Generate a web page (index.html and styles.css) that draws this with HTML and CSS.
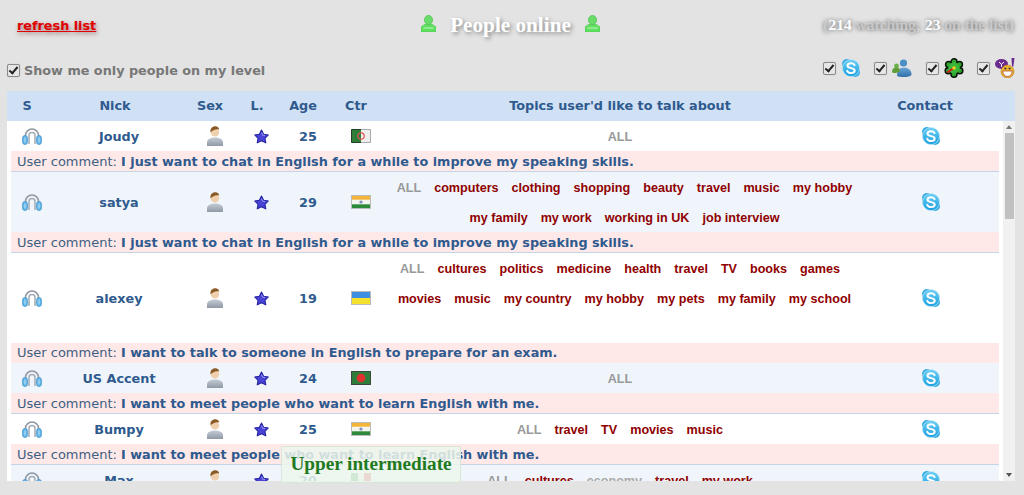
FILE: index.html
```html
<!DOCTYPE html>
<html lang="en">
<head>
<meta charset="utf-8">
<title>People online</title>
<link rel="stylesheet" href="styles.css">
</head>
<body>
<svg class="defs" width="0" height="0" aria-hidden="true">
  <defs>
    <linearGradient id="skypeFill" x1="0" y1="0" x2="0" y2="1"><stop offset="0" stop-color="#6fd0f5"/><stop offset="1" stop-color="#169fe0"/></linearGradient>
    <linearGradient id="bodyFill" x1="0" y1="0" x2="0" y2="1"><stop offset="0" stop-color="#c3cbd6"/><stop offset="1" stop-color="#8f98a5"/></linearGradient>
    <linearGradient id="msgFill" x1="0" y1="0" x2="0" y2="1"><stop offset="0" stop-color="#6aa6d8"/><stop offset="1" stop-color="#2f6ea8"/></linearGradient>
    <symbol id="skype" viewBox="0 0 20 20">
      <circle cx="6" cy="6" r="5" fill="#2fa9e6"/><circle cx="14" cy="14" r="5" fill="#2fa9e6"/>
      <circle cx="10" cy="10" r="8.6" fill="url(#skypeFill)" stroke="#c4e6f5" stroke-width=".7"/>
      <path d="M13.6 7.2C13 5.8 11.6 5.2 10 5.2c-2 0-3.5 1-3.500 2.500 0 3.300 7.200 1.600 7.200 4.800 0 1.600-1.700 2.500-3.700 2.500-1.800 0-3.200-.8-3.800-2.200" fill="none" stroke="#fff" stroke-width="2" stroke-linecap="round"/>
    </symbol>
    <symbol id="phones" viewBox="0 0 20 17">
      <path d="M3.500 10V7.500a6.500 6.500 0 0 1 13 0V10" fill="none" stroke="#8f98a3" stroke-width="1.500"/>
      <path d="M7 16V7.500a3 3 0 0 1 6 0V16" fill="none" stroke="#a3abb5" stroke-width="1.500"/>
      <rect x=".6" y="7.500" width="4.800" height="9" rx="2.300" fill="#62b6ea" stroke="#3b8ec8" stroke-width=".7"/>
      <rect x="14.600" y="7.500" width="4.800" height="9" rx="2.300" fill="#62b6ea" stroke="#3b8ec8" stroke-width=".7"/>
      <path d="M3 9.500v5M17 9.500v5" stroke="#bfe3f7" stroke-width="1"/>
    </symbol>
    <symbol id="person" viewBox="0 0 18 20">
      <path d="M1 20v-3.500C1 13 5 11.600 9 11.600s8 1.400 8 4.900V20z" fill="url(#bodyFill)"/>
      <circle cx="9" cy="6.400" r="4.200" fill="#f0cfae"/>
      <path d="M4.600 6.500C3.800 2.500 6.500 .3 9.200 .3c2.400 0 4 1.500 4 3.200-1.800-.3-3.700-.2-5.200.5-1 .5-2.400 1-3.400 2.500z" fill="#8a5a26"/>
    </symbol>
    <symbol id="star" viewBox="0 0 16 16">
      <path d="M8 1l2.300 4.600 5 .8-3.600 3.500.9 4.900L8 12.500l-4.600 2.300.9-4.900L.7 6.400l5-.8z" fill="#4a44d6" stroke="#2222a0" stroke-width="1.100" stroke-linejoin="round"/>
      <path d="M8 3.800l1.200 2.700 2.600.4" fill="none" stroke="#9a96f4" stroke-width="1.100"/>
    </symbol>
    <symbol id="user-green" viewBox="0 0 15 17">
      <path d="M0 17v-5l3.500-2.500h8L15 12v5z" fill="#5fe05f" stroke="#4cc24c" stroke-width=".6"/>
      <path d="M3.500 5a4 4.500 0 0 1 8 0c0 2.400-1.500 4.500-4 4.500S3.500 7.400 3.500 5z" fill="#69dc69" stroke="#4cc24c" stroke-width=".8"/>
      <path d="M2.500 13h10" stroke="#a6eea6" stroke-width="1.400"/>
    </symbol>
    <symbol id="messenger" viewBox="0 0 20 18">
      <circle cx="11.500" cy="4" r="3.600" fill="#4a8fc4"/>
      <path d="M5 16.500c0-5 2.500-8 7-8s7.500 3 7.500 7c0 1.500-3 2.500-7 2.500s-7.500-.5-7.500-1.500z" fill="url(#msgFill)"/>
      <circle cx="4.500" cy="7" r="2.400" fill="#6ab04c"/>
      <path d="M0 12.500c0-2.500 2-4 4.500-4S8 10 8 11.500 5 14 3 14s-3-.2-3-1.500z" fill="#5f9e3c"/>
    </symbol>
    <symbol id="icq" viewBox="0 0 20 20">
      <g fill="#2fa32f" stroke="#071207" stroke-width="1.500">
        <circle cx="10" cy="3.800" r="3"/><circle cx="15.400" cy="6.500" r="3"/><circle cx="15.800" cy="12.700" r="3"/>
        <circle cx="10" cy="16.200" r="3"/><circle cx="4.200" cy="12.700" r="3"/><circle cx="4.600" cy="6.500" r="3"/>
      </g>
      <circle cx="10" cy="10" r="5.800" fill="#39b539"/>
      <path d="M3 14.500L10 10" stroke="#d81818" stroke-width="1.800"/>
      <circle cx="10" cy="10" r="1.800" fill="#f0d020"/>
    </symbol>
    <symbol id="yahoo" viewBox="0 0 20 20">
      <ellipse cx="6.500" cy="6" rx="6.500" ry="5" fill="#6a2a8e"/>
      <path d="M4 4l2.500 2.300L9 4M6.500 6.300v2.500" fill="none" stroke="#fff" stroke-width="1"/>
      <path d="M16.500 0h3l-1.200 8.500h-1.300z" fill="#6a2a8e"/>
      <circle cx="12.500" cy="13.500" r="6.500" fill="#f2b632" stroke="#b07a1a" stroke-width=".6"/>
      <path d="M7.800 13h9.400c0 3.500-2.400 5.500-4.700 5.500S7.800 16.500 7.800 13z" fill="#fff" stroke="#a03a1a" stroke-width=".7"/>
      <circle cx="10.400" cy="10.500" r="1.100" fill="#333"/><circle cx="14.600" cy="10.500" r="1.100" fill="#333"/>
    </symbol>
    <symbol id="f-dz" viewBox="0 0 20 14">
      <rect width="20" height="14" fill="#ededed"/><rect width="10" height="14" fill="#2f7d3a"/>
      <circle cx="10" cy="7" r="3.200" fill="none" stroke="#e0524f" stroke-width="1.200"/>
      <rect x=".5" y=".5" width="19" height="13" fill="none" stroke="#aaa"/>
      <path d="M.5 .5v13h9.500M.5 .5h9.500" fill="none" stroke="#26402a"/>
    </symbol>
    <symbol id="f-in" viewBox="0 0 20 14">
      <rect width="20" height="14" fill="#f5f5f0"/><rect width="20" height="4.700" fill="#f2b53a"/><rect y="9.300" width="20" height="4.700" fill="#2d8a3a"/>
      <circle cx="10" cy="7" r="1.600" fill="#7a8fc0"/>
      <rect x=".5" y=".5" width="19" height="13" fill="none" stroke="#bbb"/>
    </symbol>
    <symbol id="f-ua" viewBox="0 0 20 14">
      <rect width="20" height="7" fill="#3f8fe0"/><rect y="7" width="20" height="7" fill="#f5e22e"/>
      <rect x=".5" y=".5" width="19" height="13" fill="none" stroke="#bbb"/>
    </symbol>
    <symbol id="f-bd" viewBox="0 0 20 14">
      <rect width="20" height="14" fill="#2f7d3a"/><circle cx="10" cy="7" r="4.300" fill="#e03030"/>
      <rect x=".5" y=".5" width="19" height="13" fill="none" stroke="#3c4a3c"/>
    </symbol>
    <symbol id="f-it" viewBox="0 0 20 14">
      <rect width="20" height="14" fill="#f2f2f2"/><rect width="7" height="14" fill="#2f9a4a"/><rect x="13" width="7" height="14" fill="#d84040"/>
    </symbol>
  </defs>
</svg>

<header class="top">
  <a class="refresh" href="#">refresh list</a>
  <h1 class="title">
    <svg class="title-icon"><use href="#user-green"/></svg>
    <span>People online</span>
    <svg class="title-icon"><use href="#user-green"/></svg>
  </h1>
  <p class="stats">(<b>214</b> watching; <b>23</b> on the list)</p>
</header>

<section class="options">
  <label class="level"><input type="checkbox" class="check" checked> Show me only people on my level</label>
  <div class="messengers">
    <label class="msg"><input type="checkbox" class="check" checked><svg class="msg-icon"><use href="#skype"/></svg></label>
    <label class="msg"><input type="checkbox" class="check" checked><svg class="msg-icon"><use href="#messenger"/></svg></label>
    <label class="msg"><input type="checkbox" class="check" checked><svg class="msg-icon"><use href="#icq"/></svg></label>
    <label class="msg"><input type="checkbox" class="check" checked><svg class="msg-icon"><use href="#yahoo"/></svg></label>
  </div>
</section>

<main class="panel">
  <div class="head">
    <span>S</span><span>Nick</span><span>Sex</span><span>L.</span><span>Age</span><span>Ctr</span><span>Topics user'd like to talk about</span><span>Contact</span>
  </div>
  <div class="viewport">
    <div class="list">

      <article class="entry">
        <div class="row">
          <svg class="i-phones"><use href="#phones"/></svg><span>Joudy</span>
          <svg class="i-person"><use href="#person"/></svg><svg class="i-star"><use href="#star"/></svg>
          <span>25</span><svg class="i-flag"><use href="#f-dz"/></svg>
          <div class="topics"><p><em>ALL</em></p></div>
          <svg class="i-skype"><use href="#skype"/></svg>
        </div>
        <p class="comment">User comment: <b>I just want to chat in English for a while to improve my speaking skills.</b></p>
      </article>

      <article class="entry alt">
        <div class="row double">
          <svg class="i-phones"><use href="#phones"/></svg><span>satya</span>
          <svg class="i-person"><use href="#person"/></svg><svg class="i-star"><use href="#star"/></svg>
          <span>29</span><svg class="i-flag"><use href="#f-in"/></svg>
          <div class="topics">
            <p class="shift"><em>ALL</em><i>computers</i><i>clothing</i><i>shopping</i><i>beauty</i><i>travel</i><i>music</i><i>my hobby</i></p>
            <p class="shift"><i>my family</i><i>my work</i><i>working in UK</i><i>job interview</i></p>
          </div>
          <svg class="i-skype"><use href="#skype"/></svg>
        </div>
        <p class="comment">User comment: <b>I just want to chat in English for a while to improve my speaking skills.</b></p>
      </article>

      <article class="entry">
        <div class="row tall">
          <svg class="i-phones"><use href="#phones"/></svg><span>alexey</span>
          <svg class="i-person"><use href="#person"/></svg><svg class="i-star"><use href="#star"/></svg>
          <span>19</span><svg class="i-flag"><use href="#f-ua"/></svg>
          <div class="topics">
            <p><em>ALL</em><i>cultures</i><i>politics</i><i>medicine</i><i>health</i><i>travel</i><i>TV</i><i>books</i><i>games</i></p>
            <p class="shift"><i>movies</i><i>music</i><i>my country</i><i>my hobby</i><i>my pets</i><i>my family</i><i>my school</i></p>
          </div>
          <svg class="i-skype"><use href="#skype"/></svg>
        </div>
        <p class="comment flush">User comment: <b>I want to talk to someone in English to prepare for an exam.</b></p>
      </article>

      <article class="entry alt">
        <div class="row">
          <svg class="i-phones"><use href="#phones"/></svg><span>US Accent</span>
          <svg class="i-person"><use href="#person"/></svg><svg class="i-star"><use href="#star"/></svg>
          <span>24</span><svg class="i-flag"><use href="#f-bd"/></svg>
          <div class="topics"><p><em>ALL</em></p></div>
          <svg class="i-skype"><use href="#skype"/></svg>
        </div>
        <p class="comment">User comment: <b>I want to meet people who want to learn English with me.</b></p>
      </article>

      <article class="entry">
        <div class="row">
          <svg class="i-phones"><use href="#phones"/></svg><span>Bumpy</span>
          <svg class="i-person"><use href="#person"/></svg><svg class="i-star"><use href="#star"/></svg>
          <span>25</span><svg class="i-flag"><use href="#f-in"/></svg>
          <div class="topics"><p><em>ALL</em><i>travel</i><i>TV</i><i>movies</i><i>music</i></p></div>
          <svg class="i-skype"><use href="#skype"/></svg>
        </div>
        <p class="comment">User comment: <b>I want to meet people who want to learn English with me.</b></p>
      </article>

      <article class="entry alt">
        <div class="row">
          <svg class="i-phones"><use href="#phones"/></svg><span>Max</span>
          <svg class="i-person"><use href="#person"/></svg><svg class="i-star"><use href="#star"/></svg>
          <span>20</span><svg class="i-flag"><use href="#f-it"/></svg>
          <div class="topics"><p><em>ALL</em><i>cultures</i><em class="soft">economy</em><i>travel</i><i>my work</i></p></div>
          <svg class="i-skype"><use href="#skype"/></svg>
        </div>
      </article>

    </div>
    <div class="scrollbar" aria-hidden="true">
      <span class="arrow up"></span>
      <span class="thumb"></span>
      <span class="arrow down"></span>
    </div>
  </div>
  <div class="tooltip">Upper intermediate</div>
</main>
</body>
</html>
```

FILE: styles.css
```css
* { box-sizing: border-box; }
html, body { margin: 0; padding: 0; height: 100%; overflow: hidden; }
body {
  background: #e3e3e3;
  font-family: "DejaVu Sans", Verdana, sans-serif;
  font-size: 12.8px;
  color: #2f5a8e;
}
.defs { position: absolute; }
p, h1 { margin: 0; }

.top {
  height: 52px;
  display: grid;
  grid-template-columns: 1fr auto 1fr;
  align-items: center;
  padding: 0 10px 2px 17px;
}
.refresh {
  color: #e00000;
  font-weight: bold;
  font-size: 12.8px;
  text-shadow: 1px 2px 4px rgba(90, 0, 0, .5);
}
.title {
  display: flex;
  align-items: center;
  gap: 14px;
  font: bold 21.2px "Liberation Serif", serif;
  color: #fff;
  text-shadow: 2px 2px 4px rgba(0, 0, 0, .4);
  margin-right: 10px;
}
.title-icon { width: 15px; height: 17px; margin-top: -3px; }
.stats {
  text-align: right;
  font: bold 15.5px "Liberation Serif", serif;
  color: rgba(215, 215, 215, .7);
  text-shadow: 0 0 4px #555;
}
.stats b { color: #fff; }

.options {
  height: 39px;
  display: flex;
  justify-content: space-between;
  align-items: center;
  padding: 0 9px 3px 7px;
}
.check {
  appearance: none;
  width: 13px;
  height: 13px;
  margin: 0;
  background: #e6e6e6;
  border: 1px solid #8b8b8b;
  border-radius: 2px;
  display: inline-flex;
  align-items: center;
  justify-content: center;
  box-shadow: 0 0 1px #aaa;
}
.check::after {
  content: "";
  width: 7px;
  height: 3px;
  margin-top: -2px;
  border-left: 2px solid #222;
  border-bottom: 2px solid #222;
  transform: rotate(-50deg);
}
.level {
  display: flex;
  align-items: center;
  gap: 4px;
  color: #777;
  font-weight: bold;
}
.messengers { display: flex; gap: 13.5px; margin-top: -4px; }
.msg { display: flex; align-items: center; gap: 5px; }
.msg-icon { width: 20px; height: 20px; }

.panel { position: relative; width: 1008px; margin-left: 7px; }
.head {
  height: 30px;
  padding-bottom: 2px;
  display: grid;
  grid-template-columns: 40px 136px 54px 40px 52px 54px 474px 136px;
  align-items: center;
  text-align: center;
  background: #d0e1f5;
  font-weight: bold;
}
.viewport {
  height: 360px;
  display: flex;
  background: #fff;
  overflow: hidden;
}
.list { width: 996px; padding: 0 4px; flex: none; }
.scrollbar {
  width: 12px;
  display: flex;
  flex-direction: column;
  background: #f1f1f1;
  flex: none;
}
.arrow { height: 12px; position: relative; flex: none; }
.arrow::after {
  content: "";
  position: absolute;
  left: 3px;
  border-left: 3px solid transparent;
  border-right: 3px solid transparent;
}
.arrow.up::after { top: 4px; border-bottom: 4px solid #777; }
.arrow.down::after { top: 4px; border-top: 4px solid #555; }
.thumb { height: 86px; width: 9px; margin: 0 auto auto 2px; background: #c1c1c1; }

.entry { background: #fff; }
.entry.alt { background: #eff5fb; }
.row {
  min-height: 30px;
  display: grid;
  grid-template-columns: 42px 132px 60px 32px 62px 44px 474px 142px;
  align-items: center;
  justify-items: center;
  font-weight: bold;
}
.row.double { min-height: 60px; }
.row.tall { min-height: 90px; }
.i-phones { width: 20px; height: 17px; }
.i-person { width: 18px; height: 20px; margin-top: -1px; }
.i-star { width: 15px; height: 15px; }
.i-flag { width: 20px; height: 14px; margin-top: -1px; }
.i-skype { width: 20px; height: 20px; margin-left: 6px; }

.topics { width: 100%; align-self: start; }
.topics p {
  height: 30px;
  padding-top: 1px;
  display: flex;
  justify-content: center;
  align-items: center;
  gap: 13px;
  font: bold 12.6px "Liberation Sans", Arial, sans-serif;
}
.topics p.shift { padding-left: 9px; }
.topics i { font-style: normal; color: #8f0000; }
.topics em { font-style: normal; color: #999; }
.topics em.soft { color: #aaa; }

.comment {
  height: 21px;
  line-height: 22px;
  padding-left: 6px;
  background: #ffe8e8;
  border-bottom: 1px solid #c5d5e8;
  color: #3d5f82;
  font-size: 13px;
  white-space: nowrap;
}
.comment.flush { height: 20px; line-height: 20px; border-bottom: 0; }
.comment b { color: #2f5a8e; font-size: 12.8px; }

.tooltip {
  position: absolute;
  left: 274px;
  top: 355px;
  width: 180px;
  height: 37px;
  padding-bottom: 2px;
  display: flex;
  align-items: center;
  justify-content: center;
  font: bold 19.2px "Liberation Serif", serif;
  color: #1f7a1f;
  background: rgba(236, 246, 236, .85);
  border: 1px solid #d8e8d8;
}
```
